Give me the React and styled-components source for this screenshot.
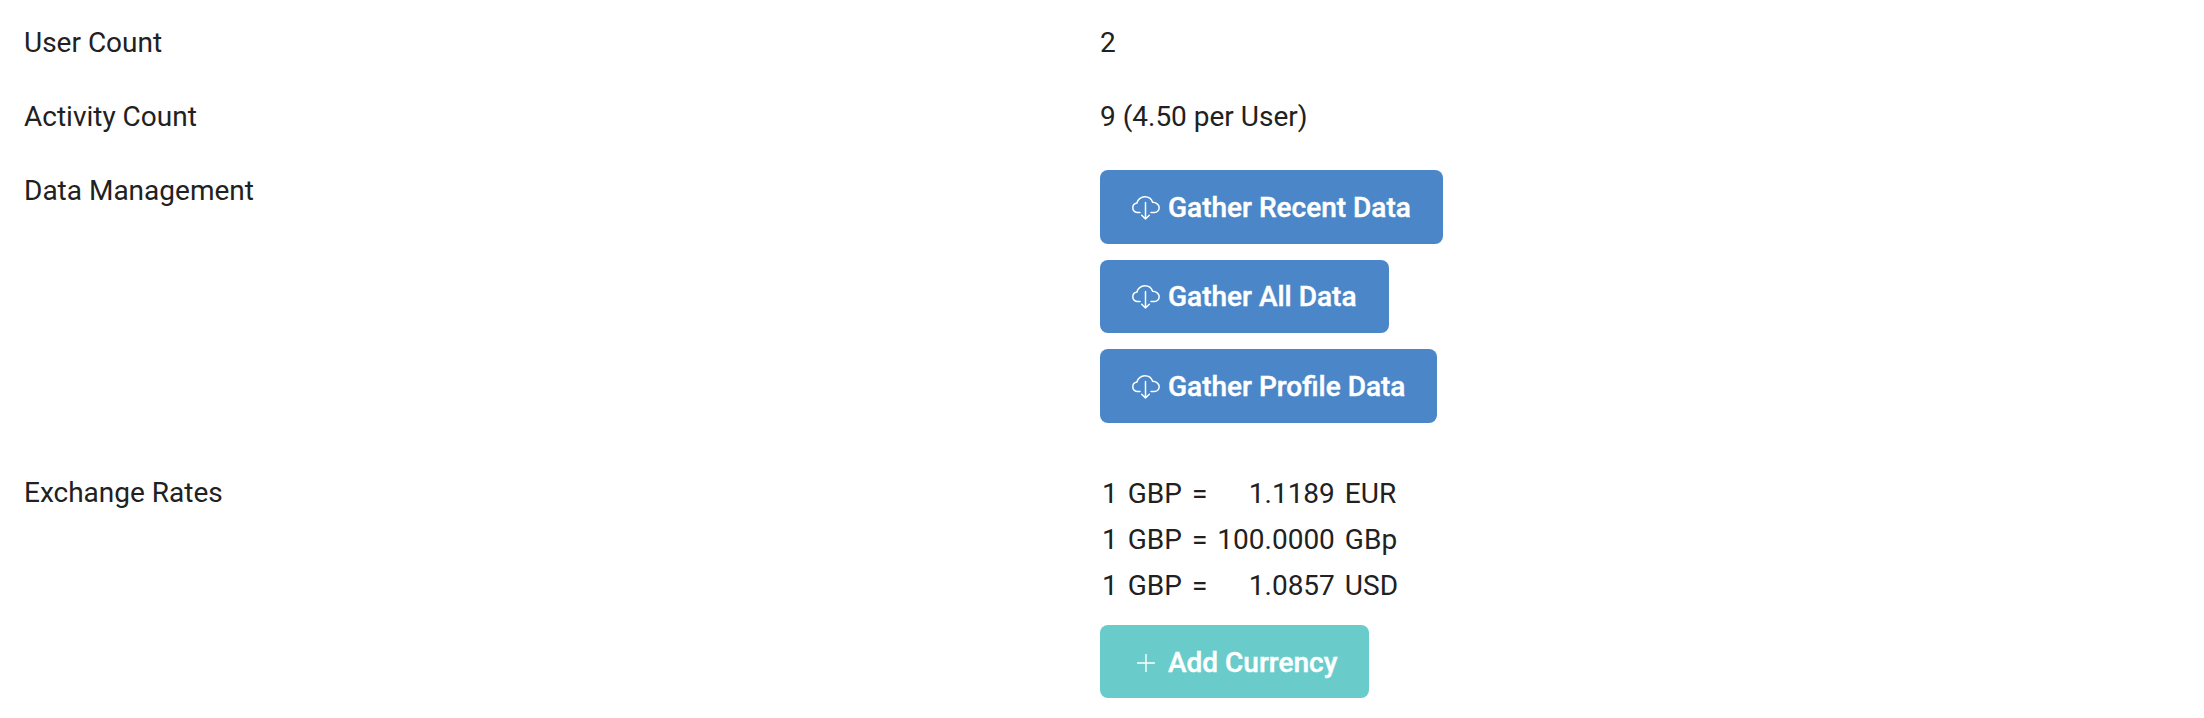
import React from "react";
import styled, { createGlobalStyle } from "styled-components";

const Global = createGlobalStyle`
  html, body { margin: 0; padding: 0; background: #fff; }
  body { font-family: Roboto, "Liberation Sans", sans-serif; color: #212121; }
`;

const Page = styled.div`
  display: flex;
  flex-direction: column;
  gap: 31.75px;
  padding: 22px 24px 20px;
  font-size: 28px;
  line-height: 42px;
`;

const Row = styled.div`
  display: grid;
  grid-template-columns: 1076px 1fr;
`;

const Label = styled.div`
  padding-top: ${(p) => p.$offset || 0}px;
`;
const Value = styled.div``;

const ButtonStack = styled.div`
  display: flex;
  flex-direction: column;
  align-items: flex-start;
  gap: 16px;
  margin: 0.5px 0 15.5px;
`;

const ActionButton = styled.button`
  display: inline-flex;
  align-items: center;
  gap: ${(p) => (p.$teal ? "13px" : "8px")};
  height: 73.5px;
  padding: 2px 32px 0 ${(p) => (p.$teal ? "37px" : "32px")};
  border: 0;
  border-radius: 8px;
  background: ${(p) => (p.$teal ? "#69ccca" : "#4a86c8")};
  color: #fff;
  font: 500 28px/42px Roboto, "Liberation Sans", sans-serif;
  -webkit-text-stroke: 0.45px #fff;
`;

const RateTable = styled.div`
  display: grid;
  grid-template-columns: repeat(5, auto);
  justify-content: start;
  column-gap: 10px;
  margin: 1px 0 16px 2px;
  line-height: 46px;
`;

const Amount = styled.span`
  text-align: right;
`;

const CloudIcon = () => (
  <svg width="28" height="24" viewBox="0 0 28 24" fill="none" stroke="currentColor" strokeWidth="1.5" strokeLinecap="round" strokeLinejoin="round">
    <path d="M8 16.5H5C2.5 16.5.8 14.3.8 11.8.8 9.2 2.6 7.4 4.9 7 5.6 3.4 9 .8 12.8.8c3.7 0 6.8 2.2 7.8 5.5 3.4 0 6.6 2.2 6.6 5.3 0 2.8-2.1 4.9-4.7 4.9H19" />
    <path d="M13.5 6.5V23M9.7 19.2l3.8 3.8 3.8-3.8" />
  </svg>
);

const PlusIcon = () => (
  <svg width="18" height="18" viewBox="0 0 18 18" fill="none" stroke="currentColor" strokeWidth="1.4" strokeLinecap="round">
    <path d="M9 .5v17M.5 9h17" />
  </svg>
);

const rates = [
  ["1.1189", "EUR"],
  ["100.0000", "GBp"],
  ["1.0857", "USD"],
];

export default function App() {
  return (
    <>
      <Global />
      <Page>
        <Row>
          <Label>User Count</Label>
          <Value>2</Value>
        </Row>
        <Row>
          <Label>Activity Count</Label>
          <Value>9 (4.50 per User)</Value>
        </Row>
        <Row>
          <Label>Data Management</Label>
          <ButtonStack>
            <ActionButton><CloudIcon />Gather Recent Data</ActionButton>
            <ActionButton><CloudIcon />Gather All Data</ActionButton>
            <ActionButton><CloudIcon />Gather Profile Data</ActionButton>
          </ButtonStack>
        </Row>
        <Row>
          <Label $offset={2}>Exchange Rates</Label>
          <Value>
            <RateTable>
              {rates.map(([amount, code]) => (
                <React.Fragment key={code}>
                  <span>1</span>
                  <span>GBP</span>
                  <span>=</span>
                  <Amount>{amount}</Amount>
                  <span>{code}</span>
                </React.Fragment>
              ))}
            </RateTable>
            <ActionButton $teal><PlusIcon />Add Currency</ActionButton>
          </Value>
        </Row>
      </Page>
    </>
  );
}
